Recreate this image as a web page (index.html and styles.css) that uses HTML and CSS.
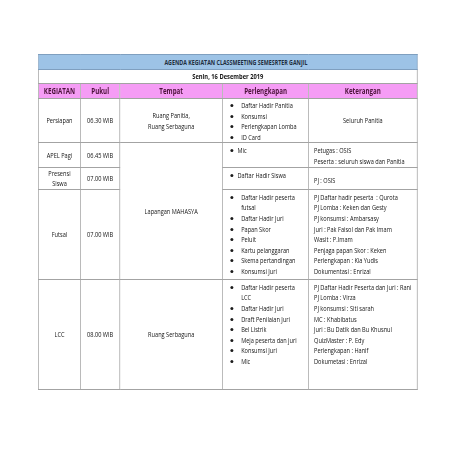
FILE: index.html
```html
<!DOCTYPE html>
<html>
<head>
<meta charset="utf-8">
<link rel="stylesheet" href="styles.css">
</head>
<body>
<div class="sheet">
<table class="agenda">
  <colgroup>
    <col class="c1"><col class="c2"><col class="c3"><col class="c4"><col class="c5">
  </colgroup>
  <tr class="r-title"><td colspan="5" class="title">AGENDA KEGIATAN CLASSMEETING SEMESRTER GANJIL</td></tr>
  <tr class="r-date"><td colspan="5" class="date">Senin, 16 Desember 2019</td></tr>
  <tr class="r-head">
    <th>KEGIATAN</th><th>Pukul</th><th>Tempat</th><th>Perlengkapan</th><th>Keterangan</th>
  </tr>
  <tr class="r-persiapan">
    <td class="mid">Persiapan</td>
    <td class="mid">06.30 WIB</td>
    <td class="mid">Ruang Panitia,<br>Ruang Serbaguna</td>
    <td class="top">
      <ul class="list tight">
        <li>Daftar Hadir Panitia</li>
        <li>Konsumsi</li>
        <li>Perlengkapan Lomba</li>
        <li>ID Card</li>
      </ul>
    </td>
    <td class="mid">Seluruh Panitia</td>
  </tr>
  <tr class="r-apel">
    <td class="mid">APEL Pagi</td>
    <td class="mid">06.45 WIB</td>
    <td class="mid" rowspan="3">Lapangan MAHASYA</td>
    <td class="top"><ul class="list small"><li>Mic</li></ul></td>
    <td class="top ket">Petugas : OSIS<br>Peserta : seluruh siswa dan Panitia</td>
  </tr>
  <tr class="r-presensi">
    <td class="mid two">Presensi<br>Siswa</td>
    <td class="mid">07.00 WIB</td>
    <td class="top"><ul class="list small"><li>Daftar Hadir Siswa</li></ul></td>
    <td class="mid ket low">PJ : OSIS</td>
  </tr>
  <tr class="r-futsal">
    <td class="mid">Futsal</td>
    <td class="mid">07.00 WIB</td>
    <td class="top">
      <ul class="list">
        <li>Daftar Hadir peserta<br>futsal</li>
        <li>Daftar Hadir Juri</li>
        <li>Papan Skor</li>
        <li>Peluit</li>
        <li>Kartu pelanggaran</li>
        <li>Skema pertandingan</li>
        <li>Konsumsi Juri</li>
      </ul>
    </td>
    <td class="top ket">PJ Daftar hadir peserta&nbsp; : Qurota<br>PJ Lomba : Keken dan Gesty<br>PJ konsumsi : Ambarsasy<br>Juri : Pak Faisol dan Pak Imam<br>Wasit : P.Imam<br>Penjaga papan Skor : Keken<br>Perlengkapan : Kia Yudis<br>Dokumentasi : Enrizal</td>
  </tr>
  <tr class="r-lcc">
    <td class="mid">LCC</td>
    <td class="mid">08.00 WIB</td>
    <td class="mid">Ruang Serbaguna</td>
    <td class="top">
      <ul class="list">
        <li>Daftar Hadir peserta<br>LCC</li>
        <li>Daftar Hadir Juri</li>
        <li>Draft Penilaian Juri</li>
        <li>Bel Listrik</li>
        <li>Meja peserta dan juri</li>
        <li>Konsumsi Juri</li>
        <li>Mic</li>
      </ul>
    </td>
    <td class="top ket">PJ Daftar Hadir Peserta dan Juri : Rani<br>PJ Lomba : Virza<br>PJ konsumsi : Siti sarah<br>MC : Khabibatus<br>Juri : Bu Datik dan Bu Khusnul<br>QuizMaster : P. Edy<br>Perlengkapan : Hanif<br>Dokumetasi : Enrizal</td>
  </tr>
</table>
</div>
</body>
</html>
```

FILE: styles.css
```css
html, body {
  margin: 0;
  padding: 0;
  background: #ffffff;
}
body {
  padding: 54px 0 0 38px;
  font-family: "Open Sans", "Noto Sans", "Liberation Sans", sans-serif;
  color: #141414;
}
.sheet {
  width: 381px;
  height: 340px;
  overflow: hidden;
}
/* the source document uses a very narrow face; the table is laid out
   wide and compressed horizontally to reproduce it */
.agenda {
  border-collapse: collapse;
  table-layout: fixed;
  width: 512px;
  font-size: 7.6px;
  font-weight: 500;
  line-height: 10.6px;
  transform: scaleX(0.74);
  transform-origin: 0 0;
}
.c1 { width: 57px; }
.c2 { width: 53px; }
.c3 { width: 139px; }
.c4 { width: 116px; }
.c5 { width: 147px; }
.agenda td, .agenda th {
  border-style: solid;
  border-color: #a3a3a3;
  border-width: 1px 1.35px;
  padding: 0;
  white-space: nowrap;
  overflow: hidden;
}
.r-title { height: 15px; }
.r-title .title {
  background: #9dc3e6;
  border-color: #7f9fbf;
  font-weight: 700;
  font-size: 7.2px;
  text-align: center;
  padding-left: 22px;
  color: #1f2f3f;
}
.r-date { height: 14px; }
.r-date .date {
  text-align: center;
  font-weight: 700;
  font-size: 7.8px;
}
.r-head { height: 15px; }
.r-head th {
  background: #f59cf5;
  font-weight: 700;
  font-size: 8.4px;
  color: #4a1238;
  text-align: center;
}
.r-persiapan { height: 44px; }
.r-apel { height: 22px; }
.r-presensi { height: 22px; }
.r-futsal { height: 90px; }
.r-lcc { height: 110px; }
.mid {
  text-align: center;
  vertical-align: middle;
}
.top {
  vertical-align: top;
}
.ket {
  text-align: left;
  padding: 2px 0 0 7px !important;
}
.ket.low {
  vertical-align: middle;
  padding: 5px 0 0 7px !important;
}
.list {
  list-style: none;
  margin: 0;
  padding: 2px 0 0 9px;
}
.list.tight {
  padding-top: 1px;
}
.list li {
  position: relative;
  padding-left: 15.5px;
}
.list li::before {
  content: "";
  position: absolute;
  left: 1px;
  top: 4px;
  width: 4px;
  height: 3px;
  border-radius: 50%;
  background: #1c1c1c;
}
.list.small li {
  padding-left: 10.5px;
}
.list.small li::before {
  left: 0.5px;
}
```
